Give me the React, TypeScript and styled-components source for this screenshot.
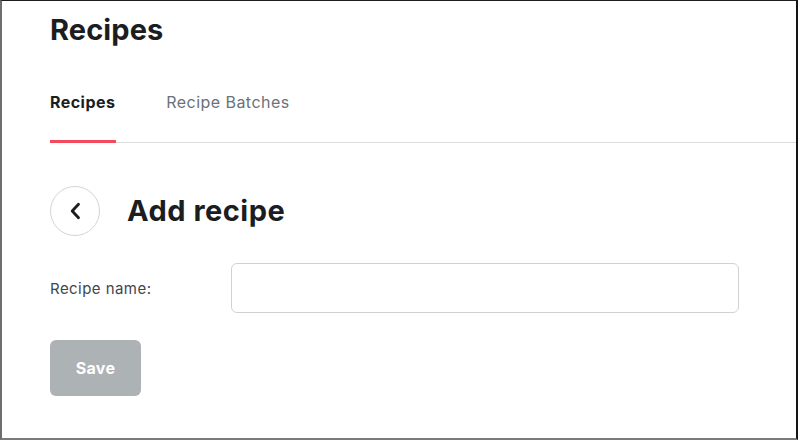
import styled, { createGlobalStyle } from "styled-components";

const GlobalStyle = createGlobalStyle`
  html, body {
    margin: 0;
    padding: 0;
    background: #ffffff;
  }
  * {
    box-sizing: border-box;
  }
`;

const Frame = styled.div`
  width: 798px;
  height: 440px;
  overflow: hidden;
  background: #ffffff;
  border-top: 1px solid #1c1c1c;
  border-left: 2px solid #6e6e6e;
  border-right: 2px solid #141414;
  border-bottom: 2px solid #7a7a7a;
  padding-left: 48px;
  font-family: Inter, "Noto Sans", "Liberation Sans", sans-serif;
  color: #1b1d1f;
`;

const PageTitle = styled.h1`
  margin: 11px 0 0;
  font-size: 29px;
  line-height: 36px;
  font-weight: 700;
  letter-spacing: 0.1px;
`;

const TabBar = styled.nav`
  display: flex;
  gap: 50px;
  margin-top: 14px;
  border-bottom: 1px solid #dcdcdc;
`;

const Tab = styled.div<{ $active?: boolean }>`
  padding: 28px 1px 26px 0;
  margin-bottom: -1px;
  font-size: 16px;
  line-height: 24px;
  letter-spacing: 0.45px;
  font-weight: ${(p) => (p.$active ? 700 : 400)};
  color: ${(p) => (p.$active ? "#1b1d1f" : "#6b7278")};
  border-bottom: 3px solid ${(p) => (p.$active ? "#f44a5c" : "transparent")};
  cursor: pointer;
`;

const HeadingRow = styled.div`
  display: flex;
  align-items: center;
  gap: 27px;
  margin-top: 43px;
`;

const BackButton = styled.button`
  display: flex;
  align-items: center;
  justify-content: center;
  width: 50px;
  height: 50px;
  padding: 0;
  border: 1px solid #d2d4d6;
  border-radius: 50%;
  background: #ffffff;
  color: #1b1d1f;
  cursor: pointer;
`;

const Heading = styled.h2`
  margin: 0;
  font-size: 29px;
  line-height: 36px;
  font-weight: 700;
  letter-spacing: 0.5px;
`;

const FormRow = styled.div`
  display: flex;
  align-items: center;
  margin-top: 27px;
`;

const Label = styled.label`
  width: 181px;
  font-size: 15px;
  letter-spacing: 0.45px;
  color: #41464b;
`;

const TextInput = styled.input`
  width: 508px;
  height: 50px;
  border: 1px solid #cfd2d4;
  border-radius: 6px;
  padding: 0 14px;
  font-family: inherit;
  font-size: 15px;
  outline: none;
`;

const SaveButton = styled.button`
  display: block;
  width: 91px;
  height: 56px;
  margin-top: 27px;
  border: none;
  border-radius: 6px;
  background: #adb2b5;
  color: #ffffff;
  font-family: inherit;
  font-size: 16px;
  font-weight: 700;
  letter-spacing: 0.3px;
  cursor: not-allowed;
`;

const Chevron = () => (
  <svg width="12" height="18" viewBox="0 0 12 18" fill="none">
    <path d="M9.5 2.2 L3.2 9 L9.5 15.8" stroke="currentColor" strokeWidth="2.8" strokeLinecap="round" strokeLinejoin="round" />
  </svg>
);

const App = () => {
  return (
    <>
      <GlobalStyle />
      <Frame>
        <PageTitle>Recipes</PageTitle>
        <TabBar>
          <Tab $active>Recipes</Tab>
          <Tab>Recipe Batches</Tab>
        </TabBar>
        <HeadingRow>
          <BackButton aria-label="Back">
            <Chevron />
          </BackButton>
          <Heading>Add recipe</Heading>
        </HeadingRow>
        <FormRow>
          <Label htmlFor="recipe-name">Recipe name:</Label>
          <TextInput id="recipe-name" />
        </FormRow>
        <SaveButton disabled>Save</SaveButton>
      </Frame>
    </>
  );
};

export default App;
